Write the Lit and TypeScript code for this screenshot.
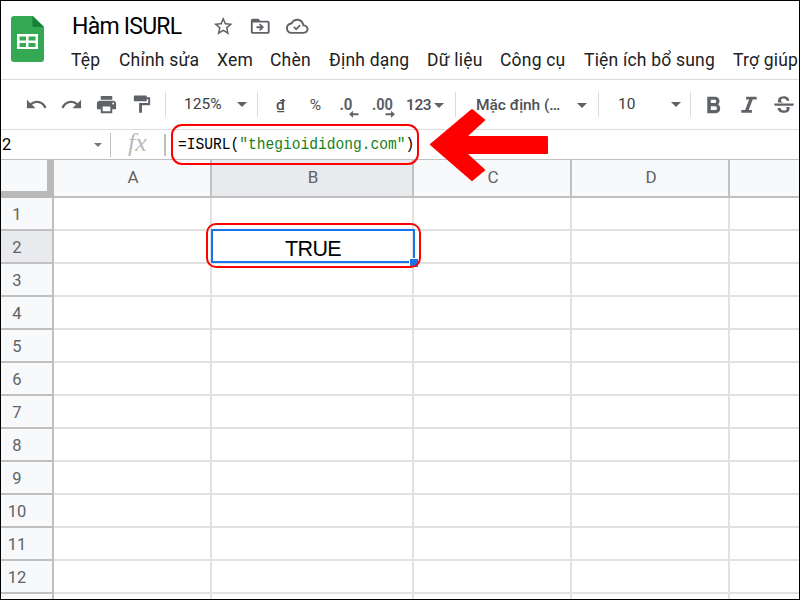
import { LitElement, html, css, svg } from "lit";
import { customElement } from "lit/decorators.js";

const MENU = ["Tệp", "Chỉnh sửa", "Xem", "Chèn", "Định dạng", "Dữ liệu", "Công cụ", "Tiện ích bổ sung", "Trợ giúp"];
const COLUMNS = ["A", "B", "C", "D", ""];
const ROWS = Array.from({ length: 13 }, (_, i) => (i < 12 ? String(i + 1) : ""));

const icon = (d: string, cls = "") => html`<svg class="icon ${cls}" viewBox="0 0 24 24"><path d=${d} /></svg>`;

const STAR = "M22 9.24l-7.19-.62L12 2 9.19 8.63 2 9.24l5.46 4.73L5.82 21 12 17.27 18.18 21l-1.63-7.03L22 9.24zM12 15.4l-3.76 2.27 1-4.28-3.32-2.88 4.38-.38L12 6.1l1.71 4.04 4.38.38-3.32 2.88 1 4.28L12 15.4z";
const FOLDER = "M20 6h-8l-2-2H4c-1.1 0-2 .9-2 2v12c0 1.1.9 2 2 2h16c1.1 0 2-.9 2-2V8c0-1.1-.9-2-2-2zm0 12H4V8h16v10zM12 9L16 13l-4 4-1.300-1.300 1.700-1.700H8v-2h4.400l-1.700-1.700z";
const CLOUD = "M19.35 10.04C18.67 6.59 15.64 4 12 4 9.11 4 6.6 5.64 5.35 8.04 2.34 8.36 0 10.91 0 14c0 3.31 2.69 6 6 6h13c2.76 0 5-2.240 5-5 0-2.640-2.050-4.780-4.650-4.960zM19 18H6c-2.210 0-4-1.790-4-4 0-2.050 1.530-3.760 3.560-3.970l1.070-.11.5-.95C8.080 7.140 9.940 6 12 6c2.620 0 4.880 1.860 5.390 4.430l.3 1.500 1.530.11c1.560.1 2.780 1.410 2.780 2.960 0 1.650-1.350 3-3 3zM10.800 13.800l-1.700-1.700-1.300 1.300 3 3 5-5-1.300-1.300z";
const UNDO = "M12.500 8c-2.650 0-5.050.99-6.900 2.600L2 7v9h9l-3.620-3.620c1.390-1.160 3.160-1.880 5.120-1.880 3.540 0 6.550 2.310 7.600 5.500l2.370-.78C21.080 11.030 17.150 8 12.500 8z";
const REDO = "M18.400 10.600C16.550 8.990 14.150 8 11.500 8c-4.650 0-8.580 3.030-9.960 7.220L3.900 16c1.050-3.190 4.050-5.500 7.600-5.500 1.950 0 3.730.72 5.120 1.880L13 16h9V7l-3.600 3.600z";
const PRINT = "M19 8H5c-1.660 0-3 1.340-3 3v6h4v4h12v-4h4v-6c0-1.660-1.340-3-3-3zm-3 11H8v-5h8v5zm3-7c-.55 0-1-.45-1-1s.45-1 1-1 1 .45 1 1-.45 1-1 1zm-1-9H6v4h12V3z";
const PAINT = "M17.500 4.500V3.500c0-.6-.4-1-1-1H5c-.6 0-1 .4-1 1v4.200c0 .6.4 1 1 1h11.500c.6 0 1-.4 1-1V6.500h1.500v4H9.500V20.500H12.500v-7.800h8.500V4.500z";
const BOLD = "M16.600 11.700c1-.7 1.700-1.800 1.700-3.100 0-2.700-1.900-4.600-4.600-4.600H5.500v17h9c2.500 0 4.500-1.900 4.500-4.600 0-2.200-1-3.800-2.400-4.700zM9.200 7.100h4c1 0 1.700.7 1.700 1.700s-.7 1.700-1.700 1.700h-4V7.100zm4.500 10.700H9.200v-4h4.500c1.100 0 1.900.8 1.900 2s-.8 2-1.900 2z";
const ITALIC = "M9.500 4v2.800h3.200L8.500 17.700H4.500v2.800h11v-2.800h-3.300L16.400 6.800H20.500V4z";
const STRIKE = "M2.500 11h20v2.400H2.500zM6.500 9.900C5.200 6.200 8 3.300 12.200 3.300c3.500 0 5.800 1.900 5.900 4.700h-3c-.1-1.500-1.100-2.300-2.900-2.300-2.700 0-3.700 2-2 3.300l1.400.9zM14.500 14.500h3.600c1.300 3.500-1.500 6.200-5.800 6.200-3.900 0-6.300-1.900-6.400-5h3c.1 1.700 1.300 2.600 3.400 2.600 2.900 0 3.900-2 2.200-3.800z";

@customElement("app-root")
export class AppRoot extends LitElement {
  static styles = css`
    :host { display: block; width: 800px; height: 600px; overflow: hidden; font-family: Roboto, "Liberation Sans", sans-serif; }
    * { box-sizing: border-box; }
    .window { position: relative; width: 800px; height: 600px; border: 1px solid #000; background: #fff; overflow: hidden; display: flex; flex-direction: column; white-space: nowrap; }
    svg { display: block; flex: none; }
    .header { height: 79px; flex: none; display: flex; border-bottom: 1px solid #d9dadc; }
    .logo { margin: 15px 0 0 10px; }
    .heading { margin-left: 27px; padding-top: 9px; }
    .titlebar { display: flex; align-items: center; height: 32px; color: #000; }
    .title { width: 141px; padding-left: 1px; font-size: 23px; letter-spacing: -0.75px; }
    .titlebar .icon { width: 22.5px; height: 22.5px; margin-right: 14.7px; }
    .menu { display: grid; grid-template-columns: 48px 98px 53px 59px 98px 73px 84px 149px 80px; height: 36px; line-height: 36px; font-size: 17.5px; letter-spacing: 0.2px; color: #202124; }
    .icon { width: 23px; height: 23px; fill: #5f6368; }
    .toolbar { height: 50px; flex: none; display: flex; align-items: center; padding-left: 18px; border-bottom: 1px solid #dadce0; color: #4d5054; font-size: 15.5px; font-weight: 500; }
    .tool { width: 35px; display: flex; justify-content: center; flex: none; }
    .gap { flex: none; width: 6px; }
    .gap.format { width: 5px; }
    .gap.large { width: 6px; }
    .currency { width: 45px; }
    .percent { width: 25px; font-weight: 400; }
    .shift { width: 37px; padding-left: 5px; }
    .sep { width: 1px; height: 25px; background: #dadce0; flex: none; }
    .caret { width: 0; height: 0; border: 5px solid transparent; border-top-color: #5f6368; border-bottom: 0; flex: none; margin-top: 1px; }
    .zoom, .number, .font, .size { display: flex; align-items: center; justify-content: space-between; flex: none; }
    .zoom { width: 91px; padding: 0 10px 1px 18px; font-weight: 400; color: #3c4043; }
    .number { width: 49px; padding: 0 11px 0 0; letter-spacing: -.4px; }
    .font { width: 142px; padding: 0 11px 0 20px; letter-spacing: -.05px; }
    .size { width: 91px; padding: 0 9px 1px 19px; font-weight: 400; color: #3c4043; }
    .decimal { fill: #5f6368; font-size: 17px; font-weight: 700; }
    .formula { height: 30px; flex: none; display: flex; align-items: center; border-bottom: 1px solid #c0c0c0; }
    .name { width: 109px; padding: 0 8px 0 1px; display: flex; align-items: center; justify-content: space-between; font-size: 16.5px; color: #000; }
    .name .caret { border-width: 4.5px; border-bottom: 0; border-top-color: #777; }
    .fx { width: 53px; text-align: center; font: italic 26px/26px "Liberation Serif", serif; color: #b9bbbd; padding-bottom: 3px; }
    .divider { width: 1px; height: 24px; background: #c0c0c0; }
    .divider.wide { width: 2px; height: 22px; }
    .code { margin-left: 12px; font: 16px/28px "Liberation Mono", monospace; color: #000; transform: scaleX(.911); transform-origin: left; }
    .string { color: #188018; }
    .sheet { display: grid; grid-template-columns: 53px 158px 202px 158px 158px 75px; grid-template-rows: 38px; grid-auto-rows: 33px; flex: none; }
    .corner { background: #f8f9fa; border-right: 7px solid #b9b9b9; border-bottom: 7px solid #b9b9b9; }
    .col, .row { background: #f8f9fa; border-right: 2px solid #c0c0c0; border-bottom: 2px solid #c0c0c0; color: #5f6368; font-size: 17px; text-align: center; }
    .col { line-height: 35px; padding-left: 2px; }
    .row { line-height: 33px; padding-right: 19px; font-size: 16.5px; }
    .active { background: #e8eaed; }
    .cell { border-right: 2px solid #e1e1e1; border-bottom: 2px solid #e1e1e1; }
    .cell.current { position: relative; z-index: 1; }
    .selection { position: absolute; left: -1px; top: -2px; width: 204px; height: 34px; border: 2px solid #1a73e8; text-align: center; font: 21.5px/36px "Liberation Sans", sans-serif; letter-spacing: -.6px; color: #000; }
    .handle { position: absolute; right: -5px; bottom: -6px; width: 9px; height: 9px; border: solid #fff; border-width: 1px 0 0 1px; background: #1a73e8; }
    .marks { position: absolute; left: -1px; top: -1px; z-index: 2; }
  `;

  private decimal(label: string, left: boolean) {
    return html`<svg class="decimal" width="35" height="30" viewBox="0 0 35 30">
      <text x=${left ? 7.5 : 7} y="20" textLength=${left ? 13 : 21} lengthAdjust="spacingAndGlyphs">${label}</text>
      ${left
        ? svg`<path d="M17 24.300l4-3.500v2.500h5.500v2H21v2.500z" />`
        : svg`<path d="M30 24.300l-4-3.500v2.500h-5.500v2H26v2.500z" />`}
    </svg>`;
  }

  render() {
    return html`<div class="window">
      <div class="header">
        <svg class="logo" width="33" height="46" viewBox="0 0 33 46">
          <path fill="#34a853" d="M3 0h19l11 11v32a3 3 0 0 1-3 3H3a3 3 0 0 1-3-3V3a3 3 0 0 1 3-3z" />
          <path fill="#188038" d="M21.500 0L33 11H21.500z" />
          <path fill="#fff" fill-rule="evenodd" d="M6 18h21v15H6zM8.500 20.500v4h6.500v-4zm9 0v4h7v-4zm-9 6.500v4h6.500v-4zm9 0v4h7v-4z" />
        </svg>
        <div class="heading">
          <div class="titlebar"><span class="title">Hàm ISURL</span>${icon(STAR)}${icon(FOLDER)}${icon(CLOUD)}</div>
          <div class="menu">${MENU.map((m) => html`<span>${m}</span>`)}</div>
        </div>
      </div>
      <div class="toolbar">
        ${[UNDO, REDO, PRINT, PAINT].map((d) => html`<span class="tool">${icon(d)}</span>`)}
        <span class="gap"></span><span class="sep"></span>
        <span class="zoom">125%<i class="caret"></i></span><span class="sep"></span>
        <span class="tool currency">₫</span>
        <span class="tool percent">%</span>
        <span class="tool shift">${this.decimal(".0", true)}</span>
        <span class="tool">${this.decimal(".00", false)}</span>
        <span class="gap large"></span>
        <span class="number">123<i class="caret"></i></span><span class="sep"></span>
        <span class="font">Mặc định (…<i class="caret"></i></span><span class="sep"></span>
        <span class="size">10<i class="caret"></i></span><span class="sep"></span>
        <span class="gap format"></span>
        ${[BOLD, ITALIC, STRIKE].map((d) => html`<span class="tool">${icon(d)}</span>`)}
      </div>
      <div class="formula">
        <span class="name">2<i class="caret"></i></span><i class="divider"></i>
        <span class="fx">fx</span><i class="divider wide"></i>
        <span class="code">=ISURL(<span class="string">"thegioididong.com"</span>)</span>
      </div>
      <div class="sheet">
        <div class="corner"></div>
        ${COLUMNS.map((c) => html`<div class="col ${c === "B" ? "active" : ""}">${c}</div>`)}
        ${ROWS.map((r) => html`<div class="row ${r === "2" ? "active" : ""}">${r}</div>
          ${COLUMNS.map((c) => r === "2" && c === "B"
            ? html`<div class="cell current"><div class="selection">TRUE<i class="handle"></i></div></div>`
            : html`<div class="cell"></div>`)}`)}
      </div>
      <svg class="marks" width="800" height="600" viewBox="0 0 800 600">
        <g fill="none" stroke="#f00" stroke-width="2">
          <rect x="172" y="125" width="246" height="39" rx="10" />
          <rect x="207" y="224" width="213" height="43" rx="9" />
        </g>
        <path fill="#f00" stroke="#f00" stroke-width="2" stroke-linejoin="round" d="M431 144.500L472 110l12 10-18.500 17H547v16H465.500L484 170l-12 10z" />
      </svg>
    </div>`;
  }
}
